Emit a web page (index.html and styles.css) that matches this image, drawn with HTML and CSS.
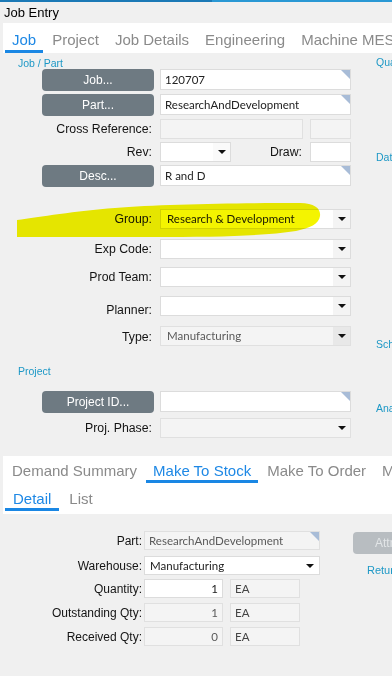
FILE: index.html
```html
<!DOCTYPE html>
<html>
<head>
<meta charset="utf-8">
<link rel="stylesheet" href="styles.css">
</head>
<body>
<div class="top-strip"></div>
<div class="title">Job Entry</div>
<nav class="tabs main-tabs">
  <span class="tab active">Job</span>
  <span class="tab">Project</span>
  <span class="tab">Job Details</span>
  <span class="tab">Engineering</span>
  <span class="tab">Machine MES</span>
</nav>

<div class="job-panel">
  <svg class="marker" width="392" height="220" viewBox="0 0 392 220">
    <path d="M17,167 C40,164 75,158 115,155 C160,151 240,150 300,150 C315,150 321,156 320,163 C319,171 310,175 296,178 C262,183 220,184 150,184 L17,184 Z" fill="#f4f400"/>
  </svg>
  <div class="form-col">
    <div class="group-title gt-first">Job / Part</div>

    <div class="row r-job">
      <div class="lbl"><span class="btn">Job...</span></div>
      <div class="field corner">120707</div>
    </div>
    <div class="row r-gap3">
      <div class="lbl"><span class="btn">Part...</span></div>
      <div class="field corner">ResearchAndDevelopment</div>
    </div>
    <div class="row r-gap3 h20">
      <div class="lbl">Cross Reference:</div>
      <div class="field-group">
        <div class="field disabled w143"></div>
        <div class="field disabled w41"></div>
      </div>
    </div>
    <div class="row r-gap3 h20">
      <div class="lbl">Rev:</div>
      <div class="field-group">
        <div class="field select w71"><span class="val"></span><span class="arrow white"></span></div>
        <div class="inline-lbl">Draw:</div>
        <div class="field w41"></div>
      </div>
    </div>
    <div class="row r-gap3">
      <div class="lbl"><span class="btn">Desc...</span></div>
      <div class="field corner">R and D</div>
    </div>

    <div class="row r-group h20">
      <div class="lbl">Group:</div>
      <div class="field select"><span class="val">Research &amp; Development</span><span class="arrow"></span></div>
    </div>
    <div class="row r-exp h20">
      <div class="lbl">Exp Code:</div>
      <div class="field select"><span class="val"></span><span class="arrow"></span></div>
    </div>
    <div class="row r-prod h20">
      <div class="lbl">Prod Team:</div>
      <div class="field select"><span class="val"></span><span class="arrow"></span></div>
    </div>
    <div class="row r-planner h20">
      <div class="lbl low">Planner:</div>
      <div class="field select"><span class="val"></span><span class="arrow"></span></div>
    </div>
    <div class="row r-type h20">
      <div class="lbl low2">Type:</div>
      <div class="field select disabled"><span class="val grey">Manufacturing</span><span class="arrow dark"></span></div>
    </div>

    <div class="group-title gt-project">Project</div>
    <div class="row r-projid">
      <div class="lbl"><span class="btn">Project ID...</span></div>
      <div class="field corner"></div>
    </div>
    <div class="row r-phase h20">
      <div class="lbl">Proj. Phase:</div>
      <div class="field select disabled"><span class="val"></span><span class="arrow"></span></div>
    </div>
  </div>
  <div class="side-col">
    <div class="group-title s-qua">Qua</div>
    <div class="group-title s-dat">Dat</div>
    <div class="group-title s-sch">Sch</div>
    <div class="group-title s-ana">Ana</div>
  </div>
</div>

<div class="sub-tabs">
  <nav class="tabs row1">
    <span class="tab">Demand Summary</span>
    <span class="tab active">Make To Stock</span>
    <span class="tab">Make To Order</span>
    <span class="tab">M</span>
  </nav>
  <nav class="tabs row2">
    <span class="tab active">Detail</span>
    <span class="tab">List</span>
  </nav>
</div>

<div class="mts-panel">
  <div class="form-col2">
    <div class="row2 m-part">
      <div class="lbl2">Part:</div>
      <div class="field2 disabled corner grey w176">ResearchAndDevelopment</div>
    </div>
    <div class="row2 m-wh">
      <div class="lbl2">Warehouse:</div>
      <div class="field2 select w176"><span class="val">Manufacturing</span><span class="arrow"></span></div>
    </div>
    <div class="row2 m-qty">
      <div class="lbl2">Quantity:</div>
      <div class="field2 num w79">1</div>
      <div class="field2 disabled uom">EA</div>
    </div>
    <div class="row2 m-out">
      <div class="lbl2">Outstanding Qty:</div>
      <div class="field2 num disabled grey w79">1</div>
      <div class="field2 disabled uom">EA</div>
    </div>
    <div class="row2 m-rec">
      <div class="lbl2">Received Qty:</div>
      <div class="field2 num disabled grey w79">0</div>
      <div class="field2 disabled uom">EA</div>
    </div>
  </div>
  <div class="side-col2">
    <div class="btn disabled-btn">Attr</div>
    <div class="group-title s-retur">Retur</div>
  </div>
</div>
</body>
</html>
```

FILE: styles.css
```css
html, body {
  margin: 0;
  padding: 0;
}
body {
  width: 392px;
  height: 676px;
  overflow: hidden;
  background: #f0f0f0;
  font-family: "Liberation Sans", Arial, sans-serif;
  color: #141414;
  position: relative;
}
.top-strip {
  height: 2px;
  background: linear-gradient(to right, #1b79b6 0, #1b79b6 212px, #2a98d4 212px);
}
.title {
  height: 21px;
  line-height: 22px;
  padding-left: 4px;
  font-size: 13px;
  color: #000;
}
.tabs {
  display: flex;
  gap: 2px;
  white-space: nowrap;
  overflow: hidden;
}
.tab {
  font-size: 15px;
  color: #8a8a8a;
  padding: 0 7px;
  line-height: 19px;
  border-bottom: 3px solid transparent;
  flex: none;
}
.tab.active {
  color: #1e88e5;
  border-bottom-color: #1a87e4;
}
.main-tabs {
  margin-left: 3px;
  height: 30px;
  background: #fff;
  padding-left: 2px;
}
.main-tabs .tab {
  padding-top: 7px;
}

.job-panel {
  position: relative;
  display: flex;
  height: 403px;
}
.marker {
  position: absolute;
  left: 0;
  top: 0;
  mix-blend-mode: multiply;
  pointer-events: none;
  z-index: 2;
}
.form-col {
  width: 376px;
  flex: none;
  display: flex;
  flex-direction: column;
}
.side-col {
  display: flex;
  flex-direction: column;
}
.group-title {
  font-size: 10.5px;
  line-height: 12px;
  color: #1d98c6;
  white-space: nowrap;
}
.form-col .group-title {
  padding-left: 18px;
}
.gt-first { margin-top: 4px; }
.gt-project { margin-top: 19px; }
.s-qua { margin-top: 3px; }
.s-dat { margin-top: 83px; }
.s-sch { margin-top: 175px; }
.s-ana { margin-top: 52px; }

.row {
  display: flex;
  align-items: flex-start;
  height: 22px;
}
.row.h20 {
  height: 20px;
  align-items: center;
}
.r-job { margin-top: 0; }
.r-gap3 { margin-top: 3px; }
.r-group { margin-top: 22px; }
.r-exp { margin-top: 10px; }
.r-prod { margin-top: 8px; }
.r-planner { margin-top: 9px; }
.r-type { margin-top: 10px; }
.r-projid { margin-top: 14px; }
.r-phase { margin-top: 5px; }

.lbl {
  width: 154px;
  flex: none;
  box-sizing: border-box;
  padding-right: 2px;
  text-align: right;
  font-size: 12.3px;
  display: flex;
  justify-content: flex-end;
  white-space: nowrap;
}
.lbl.low { padding-top: 7px; }
.lbl.low2 { padding-top: 2px; }
.btn {
  width: 112px;
  height: 22px;
  margin-right: -2px;
  border-radius: 4px;
  background: #6e7a82;
  color: #fff;
  font-size: 12px;
  line-height: 22px;
  text-align: center;
}
.field, .field2 {
  box-sizing: border-box;
  border: 1px solid #dcdcdc;
  background: #fff;
  position: relative;
  font-family: "Lato", "Liberation Sans", sans-serif;
  font-size: 11.5px;
  color: #222;
  white-space: nowrap;
  overflow: hidden;
}
.field {
  margin-left: 6px;
  width: 191px;
  height: 21px;
  line-height: 19px;
  padding-left: 4px;
  flex: none;
}
.row.h20 .field {
  height: 20px;
  line-height: 18px;
}
.field-group {
  margin-left: 6px;
  width: 191px;
  display: flex;
  align-items: center;
}
.field-group .field {
  margin-left: 0;
}
.w143 { width: 143px !important; }
.w41 { width: 41px !important; margin-left: auto !important; }
.w71 { width: 71px !important; }
.inline-lbl {
  flex: 1;
  text-align: right;
  font-size: 12.3px;
  padding-right: 8px;
}
.field.disabled, .field2.disabled {
  background: #f4f4f4;
  border-color: #e0e0e0;
}
.corner::after {
  content: "";
  position: absolute;
  top: 0;
  right: 0;
  border-style: solid;
  border-width: 0 9px 9px 0;
  border-color: transparent #a8bcd7 transparent transparent;
}
.select {
  display: flex;
  padding-left: 0;
}
.select .val {
  flex: 1;
  padding-left: 6px;
  overflow: hidden;
}
.val.grey, .field2.grey {
  color: #5a5a5a;
}
.select .arrow {
  width: 17px;
  flex: none;
  background: #f4f4f4;
  display: flex;
  align-items: center;
  justify-content: center;
}
.select .arrow.white { background: #fafafa; }
.select .arrow.dark { background: #e8e8e8; }
.select .arrow::before {
  content: "";
  border-left: 4px solid transparent;
  border-right: 4px solid transparent;
  border-top: 4px solid #111;
}

.sub-tabs {
  margin-left: 3px;
  height: 58px;
  background: #fff;
}
.sub-tabs .row1 {
  padding-left: 2px;
  height: 27px;
}
.sub-tabs .row1 .tab { padding-top: 5px; }
.sub-tabs .row2 {
  padding-left: 2px;
  height: 28px;
}
.sub-tabs .row2 .tab {
  padding-top: 6px;
  padding-left: 8px;
  padding-right: 8px;
}

.mts-panel {
  display: flex;
}
.form-col2 {
  width: 353px;
  flex: none;
  display: flex;
  flex-direction: column;
}
.row2 {
  display: flex;
  align-items: center;
  height: 19px;
}
.m-part { margin-top: 17px; }
.m-wh { margin-top: 6px; }
.m-qty { margin-top: 4px; }
.m-out { margin-top: 5px; }
.m-rec { margin-top: 5px; }
.lbl2 {
  width: 142px;
  flex: none;
  text-align: right;
  font-size: 12px;
  white-space: nowrap;
}
.field2 {
  margin-left: 2px;
  height: 19px;
  line-height: 17px;
  padding-left: 4px;
  flex: none;
}
.field2.select { padding-left: 0; }
.field2.select .val { padding-left: 5px; }
.field2.select .arrow { width: 18px; background: #fff; }
.w176 { width: 176px; }
.w79 { width: 79px; }
.num {
  text-align: right;
  padding-right: 4px;
  padding-left: 0;
}
.uom {
  width: 70px;
  margin-left: 7px;
  color: #444;
}
.side-col2 {
  display: flex;
  flex-direction: column;
}
.disabled-btn {
  margin-top: 18px;
  width: 60px;
  box-sizing: border-box;
  padding-left: 22px;
  text-align: left;
  background: #b8bdc1;
  color: #e2e5e7;
}
.s-retur {
  margin-top: 10px;
  padding-left: 14px;
  font-size: 11px;
}
```
